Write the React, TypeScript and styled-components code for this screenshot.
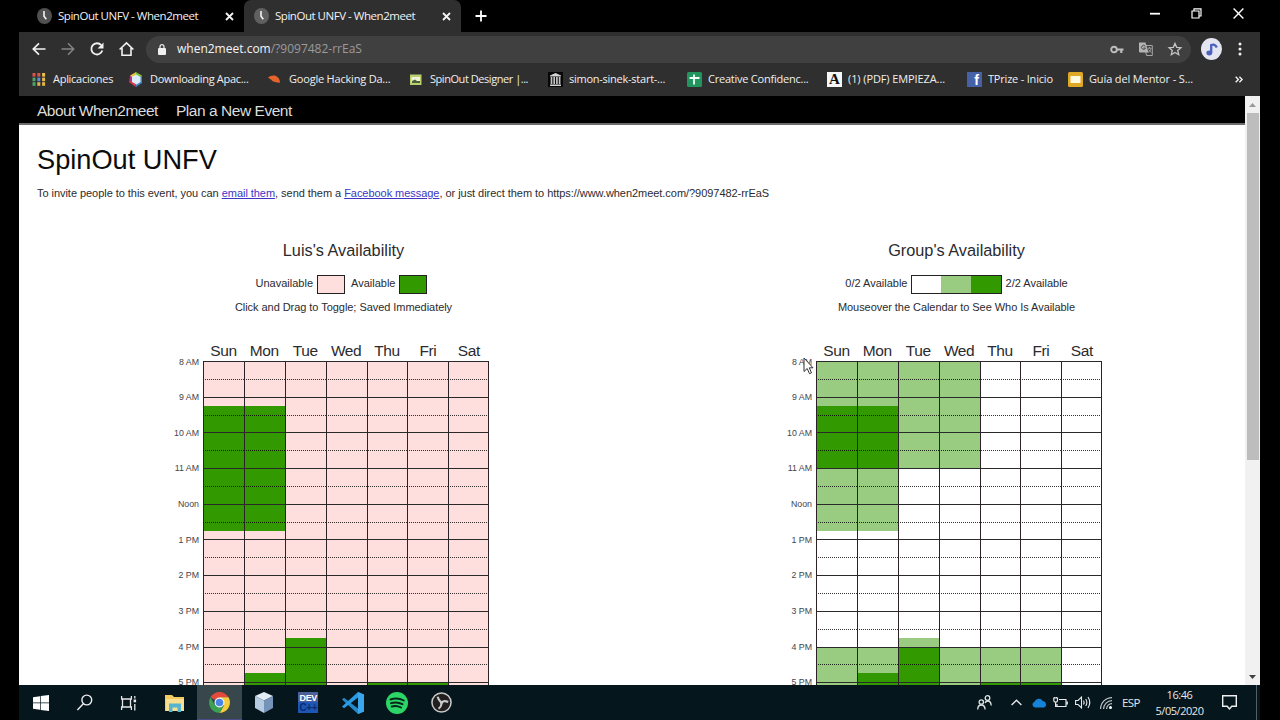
import React from "react";
import styled, { createGlobalStyle } from "styled-components";

const GlobalStyle = createGlobalStyle`
  * { box-sizing: border-box; }
  body { margin: 0; background: #000; overflow: hidden; }
  svg { display: block; flex: none; overflow: visible; }
`;

const ui = `"Open Sans", "Noto Sans", sans-serif`;
const arial = `"Liberation Sans", Arial, sans-serif`;

/* ---------- Desktop and browser frame ---------- */

const Desktop = styled.div`
  width: 1280px;
  height: 720px;
  padding: 0 20px 0 19px;
  background: #000;
  display: flex;
  flex-direction: column;
  overflow: hidden;
`;

const TabStrip = styled.div`
  height: 32px;
  flex: none;
  display: flex;
  align-items: stretch;
  color: #f2f2f2;
`;

const Tab = styled.div<{ $active?: boolean; $width: number }>`
  width: ${(p) => p.$width}px;
  display: flex;
  align-items: center;
  padding: 0 10px 0 ${(p) => (p.$active ? 10 : 18)}px;
  background: ${(p) => (p.$active ? "#2f2f30" : "transparent")};
  border-radius: 7px 7px 0 0;
`;

const TabTitle = styled.span`
  flex: 1;
  margin-left: 6px;
  font: 11.5px/16px ${ui};
  letter-spacing: -0.47px;
  white-space: nowrap;
`;

const NewTab = styled.div`
  width: 40px;
  display: grid;
  place-items: center;
`;

const WindowControls = styled.div`
  margin-left: auto;
  display: flex;
  gap: 31px;
  padding: 8px 16px 0 0;
`;

const Toolbar = styled.div`
  height: 34px;
  flex: none;
  display: flex;
  align-items: center;
  background: #2f2f30;
  padding: 0 15px 0 13px;
`;

const NavButtons = styled.div`
  display: flex;
  gap: 15px;
  width: 114px;
`;

const Omnibox = styled.div`
  width: 1045px;
  height: 27px;
  border-radius: 14px;
  background: #404041;
  display: flex;
  align-items: center;
  padding: 0 9px 0 12px;
`;

const Url = styled.span`
  margin: 0 0 0 11px;
  flex: 1;
  font: 12px/16px ${ui};
  letter-spacing: 0;
  color: #f4f4f4;
`;

const UrlPath = styled.span`
  color: #9b9b9b;
`;

const OmniboxIcons = styled.div`
  display: flex;
  align-items: center;
  gap: 15px;
`;

const ProfileArea = styled.div`
  flex: 1;
  display: flex;
  align-items: center;
  justify-content: space-between;
  padding: 0 3px 0 10px;
`;

const BookmarkBar = styled.div`
  height: 30px;
  flex: none;
  background: #2f2f30;
  display: grid;
  grid-template-columns: 97px 139px 141px 139px 139px 140px 140px 101px 1fr auto;
  padding: 0 17px 4px 13px;
  align-items: center;
  color: #efefef;
`;

const Bookmark = styled.div<{ $spacing?: number }>`
  display: flex;
  align-items: center;
  gap: 6px;
  font: 11px/16px ${ui};
  letter-spacing: ${(p) => p.$spacing ?? -0.2}px;
  white-space: nowrap;
`;

/* ---------- Web page ---------- */

const Viewport = styled.div`
  flex: 1;
  min-height: 0;
  display: flex;
  background: #fff;
`;

const Page = styled.main`
  width: 1226px;
  overflow: hidden;
  font-family: ${arial};
  color: #2b2b2f;
`;

const SiteNav = styled.nav`
  height: 29px;
  background: #000;
  border-bottom: 2px solid #6c6c6c;
  display: flex;
  gap: 18px;
  padding: 5px 0 0 18px;
  font-size: 15.5px;
  line-height: 20px;
  color: #dcdcdc;
`;

const NavLink = styled.span<{ $spacing: number }>`
  letter-spacing: ${(p) => p.$spacing}px;
`;

const EventTitle = styled.h1`
  margin: 19px 0 0 18px;
  font-size: 27.2px;
  line-height: 32px;
  font-weight: 400;
  color: #0c0c0c;
`;

const Invite = styled.p`
  margin: 9px 0 0 18px;
  font-size: 11px;
  line-height: 16px;
  letter-spacing: -0.045px;
  white-space: nowrap;
`;

const Link = styled.a`
  color: #3c35c4;
  text-decoration: underline;
`;

const Schedules = styled.div`
  display: flex;
  margin-top: 38px;
`;

const Schedule = styled.section`
  width: 613px;
  flex: none;
  display: flex;
  flex-direction: column;
  align-items: center;
  padding-left: 36px;
`;

const ScheduleTitle = styled.h2`
  margin: 0;
  font-size: 16.3px;
  line-height: 22px;
  font-weight: 400;
`;

const Legend = styled.div<{ $shift?: number }>`
  display: flex;
  height: 19px;
  margin-top: 13px;
  margin-right: ${(p) => p.$shift ?? 0}px;
  font-size: 11px;
  line-height: 18px;
`;

const Swatches = styled.div<{ $last?: boolean }>`
  display: flex;
  height: 19px;
  margin: 1px ${(p) => (p.$last ? 0 : 6)}px 0 4px;
  border: 1px solid #222;
`;

const Swatch = styled.div<{ $color: string; $width: number }>`
  width: ${(p) => p.$width}px;
  background: ${(p) => p.$color};
`;

const Hint = styled.div`
  margin-top: 6px;
  font-size: 11px;
  line-height: 16px;
  letter-spacing: -0.05px;
`;

const Calendar = styled.div`
  display: flex;
  width: 387px;
  margin: 27px 0 0 -62px;
`;

const Hours = styled.div`
  width: 84px;
  flex: none;
  padding: 13.5px 4px 0 0;
  text-align: right;
`;

const Hour = styled.div`
  height: 35.66px;
  font-size: 8.8px;
  line-height: 12px;
  color: #44444c;
`;

const Days = styled.div`
  flex: none;
  display: grid;
  grid-template-columns: repeat(7, 40.9px);
`;

const Day = styled.div`
  display: flex;
  flex-direction: column;
  &:last-child > div { border-right: 1px solid #2a2226; }
`;

const DayName = styled.span`
  height: 19px;
  text-align: center;
  font-size: 15.5px;
  line-height: 18px;
  letter-spacing: -0.4px;
`;

const borders: Record<number, string> = {
  0: "1px solid #2a2a2a",
  2: "1px dotted rgba(0,0,0,.8)",
};

const Slot = styled.div<{ $color: string; $quarter: number }>`
  height: 8.925px;
  flex: none;
  background: ${(p) => p.$color};
  border-left: 1px solid #2a2226;
  border-top: ${(p) => borders[p.$quarter] ?? "none"};
`;

const Cursor = styled.svg`
  position: absolute;
  left: 803px;
  top: 357px;
`;

const Scrollbar = styled.div`
  width: 15px;
  background: #f1f1f1;
  display: flex;
  flex-direction: column;
  align-items: center;
`;

const ScrollArrow = styled.div<{ $down?: boolean }>`
  height: 17px;
  display: grid;
  place-items: center;
  margin-top: ${(p) => (p.$down ? "auto" : 0)};
`;

const Thumb = styled.div`
  width: 12px;
  height: 347px;
  background: #bdbdbd;
`;

/* ---------- Taskbar ---------- */

const Taskbar = styled.footer`
  height: 35px;
  flex: none;
  display: flex;
  background: #05161c;
  color: #e6e8e9;
`;

const TaskButton = styled.div<{ $active?: boolean }>`
  width: 44.5px;
  display: grid;
  place-items: center;
  background: ${(p) => (p.$active ? "#38474c" : "transparent")};
  border-bottom: ${(p) => (p.$active ? "1px solid #4b4a8c" : "none")};
`;

const Tray = styled.div`
  margin-left: auto;
  display: flex;
  align-items: center;
  font: 11px/15px ${ui};
`;

const TrayItem = styled.div<{ $width: number }>`
  width: ${(p) => p.$width}px;
  display: grid;
  place-items: center;
`;

const Language = styled(TrayItem)`
  font-size: 11.5px;
  letter-spacing: -0.6px;
`;

const Clock = styled(TrayItem)`
  line-height: 16px;
  letter-spacing: -0.45px;
`;

const Notifications = styled(TrayItem)`
  margin-right: 12px;
`;

const ShowDesktop = styled.div`
  width: 4px;
  height: 35px;
  border-left: 1px solid #536067;
`;

/* ---------- Icons ---------- */

const ClockFavicon = ({ lit }: { lit?: boolean }) => (
  <svg width="15" height="16" viewBox="0 0 15 16">
    <ellipse cx="7.5" cy="8" rx="7.5" ry="8" fill={lit ? "#606060" : "#505050"} />
    <path d="M7 3v5.3l2.3 3" stroke="#f2f2f2" strokeWidth="1.6" fill="none" />
  </svg>
);

const CloseIcon = () => (
  <svg width="9" height="9" viewBox="0 0 9 9">
    <path d="M1 1l7 7M8 1l-7 7" stroke="#f4f4f4" strokeWidth="1.8" />
  </svg>
);

const AppsIcon = () => (
  <svg width="15" height="15" viewBox="0 0 15 15">
    {["#e0524a", "#d8574c", "#e8c14c", "#4fa568", "#5b8dd8", "#e5b94a", "#4fa568", "#d9b64c", "#e0b84a"].map((c, i) => (
      <rect key={i} x={0.5 + (i % 3) * 4.8} y={1 + Math.floor(i / 3) * 4.6} width="3" height="3.6" fill={c} />
    ))}
  </svg>
);

const CubeFavicon = () => (
  <svg width="15" height="15" viewBox="0 0 15 15">
    <path d="M7 0L1 3.5 3 7l4-3z" fill="#e3c33a" />
    <path d="M7 0l6 3.5-1 3L7 4z" fill="#7fb93a" />
    <path d="M1 3.5L0 10l4 2V6z" fill="#b0357e" />
    <path d="M0 10l6.5 5 1-4L3 9z" fill="#d8384a" />
    <path d="M13 3.5V11l-6 4V11l4-3V5z" fill="#3f86c8" />
    <path d="M3 4.5l4.5-2 4 2.5v5L7.5 12.5 3 10z" fill="#dcecf6" />
  </svg>
);

const BirdFavicon = () => (
  <svg width="15" height="15" viewBox="0 0 15 15">
    <path d="M0 5.5C2 4 5 2.800 7.500 3.800c3 1.200 4.500 4 4.500 7-2-.3-3.500-.5-5-.8C4 9.500 3.500 7.500 2 7z" fill="#e5642a" />
  </svg>
);

const DesignerFavicon = () => (
  <svg width="15" height="15" viewBox="0 0 15 15">
    <rect x="1" y="2.5" width="11.5" height="10.5" fill="#b9cf70" />
    <rect x="2.5" y="5" width="8.5" height="6" fill="#f1f3d9" />
    <path d="M3 11V9l3-1.500L8 9h3v2z" fill="#4d6136" />
  </svg>
);

const ArchiveFavicon = () => (
  <svg width="15" height="15" viewBox="0 0 15 15">
    <rect width="15" height="15" fill="#070707" />
    <path d="M2 3.500L7.500 1 13 3.500v1H2zM2 12.500h11V14H2z" fill="#d5d5d5" />
    <path d="M3.500 5v7M6.200 5v7M8.900 5v7M11.600 5v7" stroke="#c4c4c4" strokeWidth="1.7" />
  </svg>
);

const SheetFavicon = () => (
  <svg width="15" height="15" viewBox="0 0 15 15">
    <rect width="15" height="15" rx="1.5" fill="#22955f" />
    <path d="M2.500 6h10M7 2.500v10" stroke="#f3fff9" strokeWidth="1.8" />
  </svg>
);

const LetterTile = styled.div<{ $facebook?: boolean }>`
  width: 15px;
  height: 15px;
  flex: none;
  background: ${(p) => (p.$facebook ? "#4562a8" : "#f6f6f6")};
  color: ${(p) => (p.$facebook ? "#fff" : "#111")};
  font: bold ${(p) => (p.$facebook ? `14px/16px ${arial}` : `15px/15px "Liberation Serif", serif`)};
  text-align: center;
  padding-left: ${(p) => (p.$facebook ? 4 : 0)}px;
  letter-spacing: 0;
`;

const SlidesFavicon = () => (
  <svg width="15" height="15" viewBox="0 0 15 15">
    <rect width="15" height="15" rx="1.5" fill="#dfa925" />
    <rect x="2.5" y="4" width="10" height="7" fill="#fff9df" />
  </svg>
);

const BrowserTabs = () => (
  <TabStrip>
    <Tab $width={225}>
      <ClockFavicon />
      <TabTitle>SpinOut UNFV - When2meet</TabTitle>
      <CloseIcon />
    </Tab>
    <Tab $active $width={217}>
      <ClockFavicon lit />
      <TabTitle>SpinOut UNFV - When2meet</TabTitle>
      <CloseIcon />
    </Tab>
    <NewTab>
      <svg width="12" height="12" viewBox="0 0 12 12">
        <path d="M6 .5v11M.5 6h11" stroke="#fff" strokeWidth="1.8" />
      </svg>
    </NewTab>
    <WindowControls>
      <svg width="10" height="11" viewBox="0 0 10 11">
        <path d="M0 5.700h10" stroke="#fff" strokeWidth="1.8" />
      </svg>
      <svg width="11" height="11" viewBox="0 0 11 11" fill="none" stroke="#fff" strokeWidth="1.2">
        <path d="M1 3h7v7H1zM3 3V.8h7V8H8" />
      </svg>
      <svg width="11" height="11" viewBox="0 0 11 11">
        <path d="M.6.600l9.800 9.800M10.400.600L.6 10.400" stroke="#fff" strokeWidth="1.4" />
      </svg>
    </WindowControls>
  </TabStrip>
);

const BrowserToolbar = () => (
  <Toolbar>
    <NavButtons>
      <svg width="14" height="14" viewBox="0 0 14 14" fill="none" stroke="#f2f2f2" strokeWidth="1.7">
        <path d="M13.500 7H1.500M7 1.300L1.300 7 7 12.700" />
      </svg>
      <svg width="14" height="14" viewBox="0 0 14 14" fill="none" stroke="#858585" strokeWidth="1.5">
        <path d="M.5 7h12M7 1.300L12.700 7 7 12.700" />
      </svg>
      <svg width="14" height="14" viewBox="0 0 14 14" fill="none" stroke="#f2f2f2" strokeWidth="1.8">
        <path d="M12.300 8.500A5.600 5.600 0 1 1 11.200 3.200" />
        <path d="M13.500.500v6H7.600z" fill="#f2f2f2" stroke="none" />
      </svg>
      <svg width="15" height="14" viewBox="0 0 15 14" fill="none" stroke="#f2f2f2" strokeWidth="1.6">
        <path d="M.6 7.500L7.500.900l6.900 6.600M3 6v7.200h9V6" />
      </svg>
    </NavButtons>
    <Omnibox>
      <svg width="8" height="11" viewBox="0 0 8 11">
        <rect y="4" width="8" height="7" rx="1" fill="#f0f0f0" />
        <path d="M2 4.500V2.700a2 2 0 0 1 4 0v1.800" stroke="#f0f0f0" strokeWidth="1.2" fill="none" />
      </svg>
      <Url>when2meet.com<UrlPath>/?9097482-rrEaS</UrlPath></Url>
      <OmniboxIcons>
        <svg width="14" height="9" viewBox="0 0 14 9">
          <circle cx="4" cy="4.5" r="2.8" fill="none" stroke="#bdbdbd" strokeWidth="1.9" />
          <path d="M7 4.500h6.500M11.300 4.500V8" stroke="#bdbdbd" strokeWidth="2.1" fill="none" />
        </svg>
        <svg width="14" height="14" viewBox="0 0 14 14">
          <path d="M5.500 3.500h7.800v10H7.500z" fill="none" stroke="#a6a6a6" />
          <path d="M0 .500h6.500l3 10H1a1 1 0 0 1-1-1z" fill="#b4b4b4" />
          <path d="M6.300 4.300A2 2 0 1 0 6.500 6H4.500" fill="none" stroke="#484848" />
          <path d="M8.500 6.200h4M10.500 5v1.200M12 6.500c-.6 2-1.500 3-2.700 3.800M9.500 7.500l2.700 3.200" fill="none" stroke="#a6a6a6" strokeWidth=".9" />
        </svg>
        <svg width="14" height="14" viewBox="0 0 14 14">
          <path d="M7 1.400l1.700 3.900 4.200.4-3.200 2.800 1 4.200L7 10.500l-3.700 2.200 1-4.200L1.100 5.700l4.200-.4z" fill="none" stroke="#c6c6c6" strokeWidth="1.3" />
        </svg>
      </OmniboxIcons>
    </Omnibox>
    <ProfileArea>
      <svg width="21" height="22" viewBox="0 0 21 22">
        <ellipse cx="10.5" cy="11" rx="10.5" ry="11" fill="#e4e5f1" />
        <ellipse cx="8.3" cy="15" rx="2.9" ry="2.4" fill="#4a62bd" />
        <path d="M10.200 15V7c2.300-.8 4.300-.3 5.600 2.500" stroke="#4a62bd" strokeWidth="2.3" fill="none" />
      </svg>
      <svg width="4" height="14" viewBox="0 0 4 14" fill="#f2f2f2">
        <circle cx="2" cy="2" r="1.5" />
        <circle cx="2" cy="7" r="1.5" />
        <circle cx="2" cy="12" r="1.5" />
      </svg>
    </ProfileArea>
  </Toolbar>
);

const Bookmarks = () => (
  <BookmarkBar>
    <Bookmark $spacing={-0.28}><AppsIcon />Aplicaciones</Bookmark>
    <Bookmark $spacing={-0.3}><CubeFavicon />Downloading Apac...</Bookmark>
    <Bookmark><BirdFavicon />Google Hacking Da...</Bookmark>
    <Bookmark $spacing={-0.45}><DesignerFavicon />SpinOut Designer |...</Bookmark>
    <Bookmark $spacing={-0.25}><ArchiveFavicon />simon-sinek-start-...</Bookmark>
    <Bookmark $spacing={-0.23}><SheetFavicon />Creative Confidenc...</Bookmark>
    <Bookmark $spacing={-0.1}><LetterTile>A</LetterTile>(1) (PDF) EMPIEZA...</Bookmark>
    <Bookmark><LetterTile $facebook>f</LetterTile>TPrize - Inicio</Bookmark>
    <Bookmark $spacing={-0.13}><SlidesFavicon />Guía del Mentor - S...</Bookmark>
    <svg width="8" height="7" viewBox="0 0 8 7" fill="none" stroke="#f2f2f2" strokeWidth="1.4">
      <path d="M.7.700l2.700 2.800L.7 6.300M4.400.700l2.700 2.800-2.700 2.800" />
    </svg>
  </BookmarkBar>
);

/* ---------- Calendar data: [first quarter, end quarter, colour] ---------- */

type Range = [number, number, string];
const PINK = "#ffdede";
const FULL = "#339900";
const HALF = "#99cc80";
const dayNames = ["Sun", "Mon", "Tue", "Wed", "Thu", "Fri", "Sat"];
const hourNames = ["8 AM", "9 AM", "10 AM", "11 AM", "Noon", "1 PM", "2 PM", "3 PM", "4 PM", "5 PM"];

const luis: Range[][] = [
  [[5, 19, FULL]],
  [[5, 19, FULL], [35, 40, FULL]],
  [[31, 40, FULL]],
  [],
  [[36, 40, FULL]],
  [[36, 40, FULL]],
  [],
];

const group: Range[][] = [
  [[0, 5, HALF], [5, 12, FULL], [12, 19, HALF], [32, 40, HALF]],
  [[0, 5, HALF], [5, 12, FULL], [12, 19, HALF], [32, 35, HALF], [35, 40, FULL]],
  [[0, 12, HALF], [31, 32, HALF], [32, 40, FULL]],
  [[0, 12, HALF], [32, 40, HALF]],
  [[32, 36, HALF], [36, 40, FULL]],
  [[32, 36, HALF], [36, 40, FULL]],
  [],
];

const colorAt = (ranges: Range[], q: number, empty: string) =>
  ranges.find(([from, to]) => q >= from && q < to)?.[2] ?? empty;

const WeekCalendar = ({ data, empty }: { data: Range[][]; empty: string }) => (
  <Calendar>
    <Hours>
      {hourNames.map((h) => <Hour key={h}>{h}</Hour>)}
    </Hours>
    <Days>
      {dayNames.map((name, d) => (
        <Day key={name}>
          <DayName>{name}</DayName>
          {Array.from({ length: 38 }, (_, q) => (
            <Slot key={q} $quarter={q % 4} $color={colorAt(data[d], q, empty)} />
          ))}
        </Day>
      ))}
    </Days>
  </Calendar>
);

const DevTile = styled.div`
  width: 20px;
  height: 21px;
  background: linear-gradient(#4c5f9d 0 48%, #1d56b5 48%);
  font: bold 9px/10px ${arial};
  text-align: center;
  letter-spacing: -0.4px;
  color: #fff;
  b, i { display: block; font-style: normal; }
  b { padding-top: 1px; }
  i { color: #0b2b71; font-size: 10px; }
`;

const Taskbuttons = () => (
  <>
    <TaskButton>
      <svg width="16" height="16" viewBox="0 0 16 16" fill="#fff">
        <path d="M0 2.200l7-1v6.400H0zM7.700 1.100L16 0v7.600H7.700zM0 8.300h7v6.500l-7-1zM7.700 8.300H16V16l-8.300-1.100z" />
      </svg>
    </TaskButton>
    <TaskButton>
      <svg width="17" height="17" viewBox="0 0 17 17" fill="none" stroke="#eee" strokeWidth="1.4">
        <circle cx="9.8" cy="6" r="4.9" />
        <path d="M6.300 9.700L.4 16" />
      </svg>
    </TaskButton>
    <TaskButton>
      <svg width="18" height="16" viewBox="0 0 18 16" fill="none" stroke="#e8e8e8" strokeWidth="1.3">
        <path d="M.6 1v3h9.800V1M.6 15v-3h9.800v3M1.500 4v8M9.500 4v8M13.800 1v2.500M13.800 9v6.500" />
        <rect x="12.6" y="4.5" width="2.5" height="2.8" fill="#e8e8e8" stroke="none" />
      </svg>
    </TaskButton>
    <TaskButton>
      <svg width="20" height="18" viewBox="0 0 20 18">
        <path d="M0 1h7l2 2h10v14H0z" fill="#f1cb62" />
        <path d="M1 5h18v12H1z" fill="#fae08e" />
        <path d="M4 18V9.500h12V18h-3.500v-4.500h-5V18z" fill="#55b4cf" />
      </svg>
    </TaskButton>
    <TaskButton $active>
      <svg width="21" height="21" viewBox="0 0 22 22">
        <path d="M11 11L1.500 5.500A11 11 0 0 1 20.500 5.500H11z" fill="#e34a3c" />
        <path d="M11 5.500h9.500A11 11 0 0 1 11 22l4.800-8.200z" fill="#f6cb3e" />
        <path d="M1.500 5.500A11 11 0 0 0 11 22l4.800-8.200L11 16l-4.800-2.200z" fill="#3ba254" />
        <circle cx="11" cy="11" r="5.2" fill="#f7f7f7" />
        <circle cx="11" cy="11" r="4" fill="#4a86e8" />
      </svg>
    </TaskButton>
    <TaskButton>
      <svg width="20" height="21" viewBox="0 0 20 21">
        <path d="M10 0l9 4-9 4.500L1 4z" fill="#e3edf6" />
        <path d="M1 4l9 4.500V21l-9-5z" fill="#b4cbe1" />
        <path d="M19 4l-9 4.500V21l9-5z" fill="#7694b9" />
      </svg>
    </TaskButton>
    <TaskButton>
      <DevTile><b>DEV</b><i>C++</i></DevTile>
    </TaskButton>
    <TaskButton>
      <svg width="22" height="22" viewBox="0 0 22 22">
        <path d="M16 0l6 2.500v17L16 22 0 7.500 2 5.800l14 10.700z" fill="#2489ca" />
        <path d="M16 0L0 14.500l2 1.700L16 5.500z" fill="#2a9be2" />
        <path d="M16 0l6 2.500v17L16 22z" fill="#3aa7ec" />
      </svg>
    </TaskButton>
    <TaskButton>
      <svg width="22" height="22" viewBox="0 0 22 22">
        <circle cx="11" cy="11" r="11" fill="#2bd566" />
        <path d="M4.500 7.500c4.500-1.500 9.500-1 13.300 1M5 11.200c4-1.200 8-.8 11.500 1M5.700 14.500c3.300-.8 6.500-.5 9.300 1" stroke="#07251a" strokeWidth="1.9" fill="none" strokeLinecap="round" />
      </svg>
    </TaskButton>
    <TaskButton>
      <svg width="21" height="21" viewBox="0 0 22 22" fill="none">
        <circle cx="11" cy="11" r="10" fill="#231f20" stroke="#c9c9c9" strokeWidth="1.6" />
        <path d="M11 11C9.500 9.500 7.500 8 7 5M11 11c1.500-1.500 4-2 7-.5M11 11c.3 2.500-.5 4.500-3 6.500" stroke="#c9c9c9" strokeWidth="2.2" />
        <circle cx="11" cy="11" r="1.6" fill="#c9c9c9" />
      </svg>
    </TaskButton>
  </>
);

const SystemTray = () => (
  <Tray>
    <TrayItem $width={37}>
      <svg width="15" height="15" viewBox="0 0 15 15" fill="none" stroke="#e1e4e5" strokeWidth="1.3">
        <circle cx="10.5" cy="3" r="2.3" />
        <circle cx="4.3" cy="7" r="2.2" />
        <path d="M.7 14.500c0-3 1.500-4.500 3.700-4.500s3.500 1.500 3.700 4.500M8 8c.7-1.500 1.500-2 2.700-2 2 0 3.300 1.500 3.500 4.500" />
      </svg>
    </TrayItem>
    <TrayItem $width={27}>
      <svg width="11" height="7" viewBox="0 0 11 7" fill="none" stroke="#e6e8e9" strokeWidth="1.4">
        <path d="M.6 6L5.500 1.200 10.400 6" />
      </svg>
    </TrayItem>
    <TrayItem $width={19}>
      <svg width="15" height="10" viewBox="0 0 15 10">
        <path d="M3 9.500a3 3 0 0 1-.5-5.800A4.500 4.500 0 0 1 10.700 3 3.400 3.400 0 0 1 12 9.500z" fill="#1583d8" />
      </svg>
    </TrayItem>
    <TrayItem $width={23}>
      <svg width="15" height="11" viewBox="0 0 15 11" fill="none" stroke="#e6e8e9" strokeWidth="1.2">
        <path d="M6 2.500h7v7H4V7M14.300 4.500v3M.8 1v2.500c0 1 .6 1.600 1.800 1.600S4.500 4.500 4.500 3.500V1zM2.600 5v4.500H4M1.700 0v1M3.500 0v1" />
      </svg>
    </TrayItem>
    <TrayItem $width={21}>
      <svg width="16" height="13" viewBox="0 0 16 13" fill="none" stroke="#e6e8e9" strokeWidth="1.1">
        <path d="M.6 4.500h2.500L6.500 1v11L3.100 8.500H.6zM8.500 4.500q1.300 2 0 4M10.700 3q2.300 3.500 0 7M13 1q3.500 5.500 0 11" />
      </svg>
    </TrayItem>
    <TrayItem $width={25}>
      <svg width="12" height="12" viewBox="0 0 12 12" fill="none" stroke="#bcc3c6" strokeWidth="1.2">
        <path d="M.6 12A11.400 11.400 0 0 1 12 .6M3.600 12A8.400 8.400 0 0 1 12 3.600M6.600 12A5.400 5.400 0 0 1 12 6.600" />
        <circle cx="10.5" cy="10.5" r="1.5" fill="#fff" stroke="none" />
      </svg>
    </TrayItem>
    <Language $width={26}>ESP</Language>
    <Clock $width={71}>
      <span>16:46</span>
      <span>5/05/2020</span>
    </Clock>
    <Notifications $width={29}>
      <svg width="15" height="15" viewBox="0 0 15 15" fill="none" stroke="#eceeef" strokeWidth="1.4">
        <path d="M.7.700h13.600v10.500H9.800L7.500 14l-2.300-2.800H.7z" />
      </svg>
    </Notifications>
    <ShowDesktop />
  </Tray>
);

export default function App() {
  return (
    <Desktop>
      <GlobalStyle />
      <BrowserTabs />
      <BrowserToolbar />
      <Bookmarks />
      <Viewport>
        <Page>
          <SiteNav>
            <NavLink $spacing={-0.5}>About When2meet</NavLink>
            <NavLink $spacing={-0.45}>Plan a New Event</NavLink>
          </SiteNav>
          <EventTitle>SpinOut UNFV</EventTitle>
          <Invite>
            To invite people to this event, you can <Link>email them</Link>, send them a <Link>Facebook message</Link>, or
            just direct them to https://www.when2meet.com/?9097482-rrEaS
          </Invite>
          <Schedules>
            <Schedule>
              <ScheduleTitle>Luis's Availability</ScheduleTitle>
              <Legend $shift={4}>
                Unavailable
                <Swatches><Swatch $color={PINK} $width={26} /></Swatches>
                Available
                <Swatches $last><Swatch $color={FULL} $width={26} /></Swatches>
              </Legend>
              <Hint>Click and Drag to Toggle; Saved Immediately</Hint>
              <WeekCalendar data={luis} empty={PINK} />
            </Schedule>
            <Schedule>
              <ScheduleTitle>Group's Availability</ScheduleTitle>
              <Legend>
                0/2 Available
                <Swatches $last>
                  <Swatch $color="#fff" $width={29} />
                  <Swatch $color={HALF} $width={30} />
                  <Swatch $color={FULL} $width={30} />
                </Swatches>
                &nbsp;2/2 Available
              </Legend>
              <Hint>Mouseover the Calendar to See Who Is Available</Hint>
              <WeekCalendar data={group} empty="#fff" />
            </Schedule>
          </Schedules>
        </Page>
        <Scrollbar>
          <ScrollArrow>
            <svg width="7" height="4" viewBox="0 0 7 4"><path d="M0 4L3.500 0 7 4z" fill="#9a9a9a" /></svg>
          </ScrollArrow>
          <Thumb />
          <ScrollArrow $down>
            <svg width="7" height="4" viewBox="0 0 7 4"><path d="M0 0h7L3.500 4z" fill="#404040" /></svg>
          </ScrollArrow>
        </Scrollbar>
      </Viewport>
      <Taskbar>
        <Taskbuttons />
        <SystemTray />
      </Taskbar>
      <Cursor width="11" height="18" viewBox="0 0 11 18">
        <path d="M1 1v13.500l3.200-3 2.300 5.200 2-.9-2.200-5H10z" fill="#fff" stroke="#333" />
      </Cursor>
    </Desktop>
  );
}
